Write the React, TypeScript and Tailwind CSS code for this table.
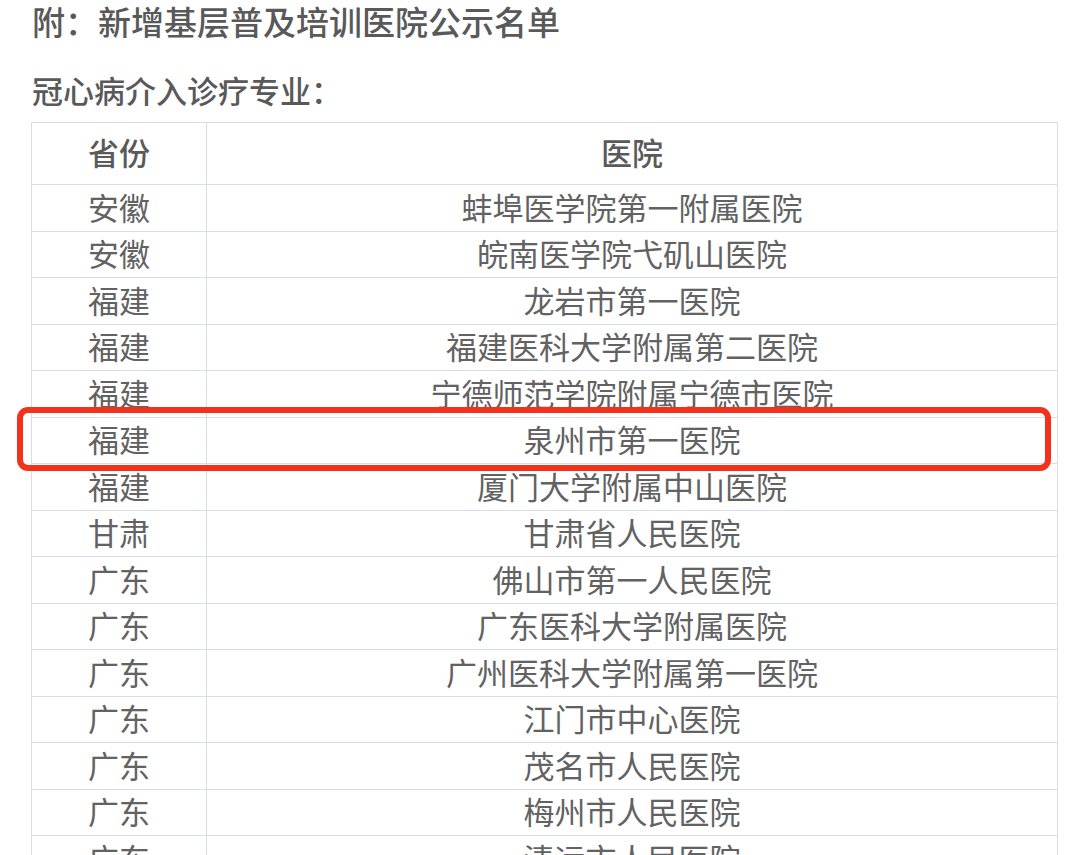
import React from "react";

const rows: [string, string][] = [
  ["安徽", "蚌埠医学院第一附属医院"],
  ["安徽", "皖南医学院弋矶山医院"],
  ["福建", "龙岩市第一医院"],
  ["福建", "福建医科大学附属第二医院"],
  ["福建", "宁德师范学院附属宁德市医院"],
  ["福建", "泉州市第一医院"],
  ["福建", "厦门大学附属中山医院"],
  ["甘肃", "甘肃省人民医院"],
  ["广东", "佛山市第一人民医院"],
  ["广东", "广东医科大学附属医院"],
  ["广东", "广州医科大学附属第一医院"],
  ["广东", "江门市中心医院"],
  ["广东", "茂名市人民医院"],
  ["广东", "梅州市人民医院"],
  ["广东", "清远市人民医院"],
];

export default function App() {
  return (
    <div
      className="relative h-[855px] w-[1080px] overflow-hidden bg-white text-[#5c5c5c]"
      style={{ fontFamily: '"Noto Sans CJK SC", "Noto Sans", sans-serif' }}
    >
      <div className="pl-[32px] pt-0">
        <h1 className="text-[33px] leading-[42px] font-medium text-[#595959]">附：新增基层普及培训医院公示名单</h1>
        <h2 className="mt-[27px] text-[31px] leading-[42px] font-medium text-[#595959]">冠心病介入诊疗专业：</h2>
      </div>
      <div className="ml-[31px] mt-[11px] w-[1027px] border-t border-l border-[#d9dde6]">
        <div className="grid h-[62px] grid-cols-[175px_1fr] border-b border-[#d9dde6] text-[31px] font-medium text-[#5a5a5a]">
          <div className="flex items-center justify-center border-r border-[#d9dde6] pb-[3px]">省份</div>
          <div className="flex items-center justify-center border-r border-[#d9dde6] pb-[3px]">医院</div>
        </div>
        {rows.map(([p, h], i) => (
          <div
            key={i}
            className="grid h-[46.5px] grid-cols-[175px_1fr] border-b border-[#d9dde6] text-[31px] text-[#626262]"
          >
            <div className="flex items-center justify-center border-r border-[#d9dde6] pb-[3px] leading-none">{p}</div>
            <div className="flex items-center justify-center border-r border-[#d9dde6] pb-[3px] leading-none">{h}</div>
          </div>
        ))}
      </div>
      <div className="absolute left-[17px] top-[407px] h-[64px] w-[1034px] rounded-[11px] border-[6px] border-[#f2321b]" />
    </div>
  );
}
